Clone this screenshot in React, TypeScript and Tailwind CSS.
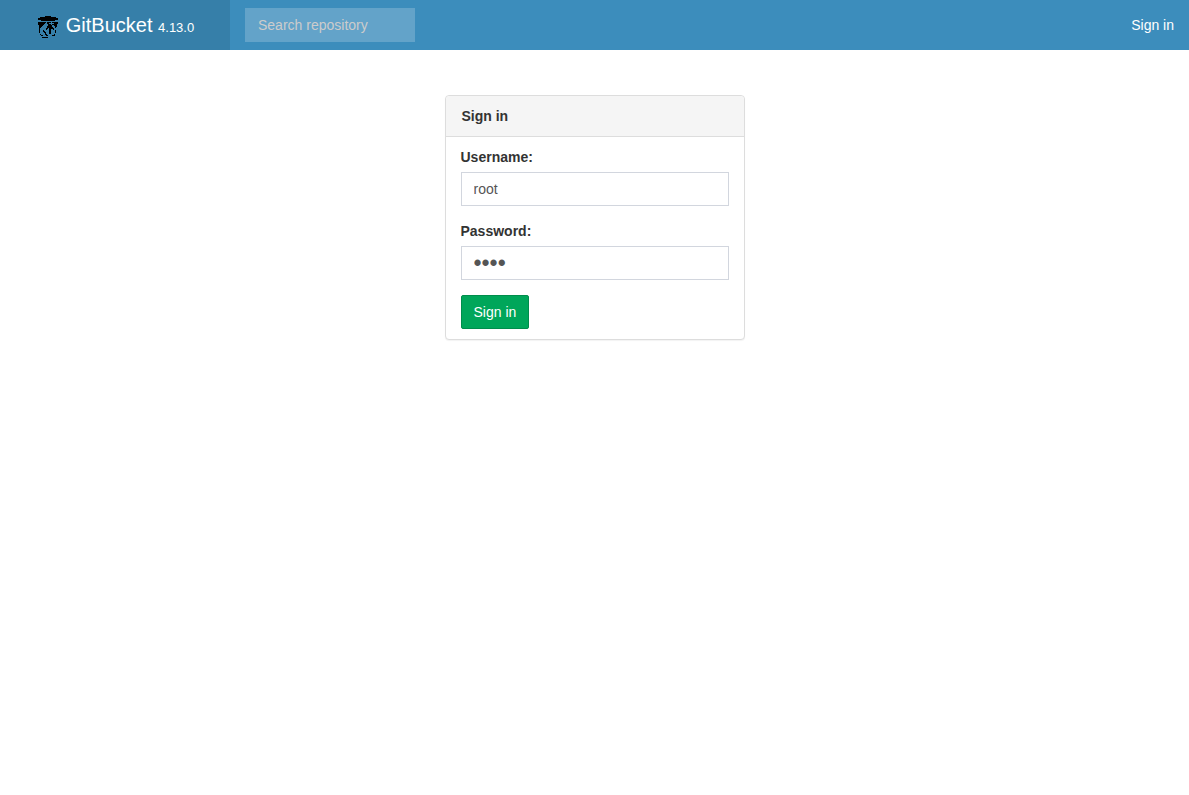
import { useState } from "react";

const VERSION = "4.13.0";

function BucketLogo() {
  return (
    <svg
      aria-hidden="true"
      width="20"
      height="22"
      viewBox="0 0 20 22"
      fill="#000"
      shapeRendering="crispEdges"
    >
      {/* rim */}
      <path d="M7 0h6v1h5v1h2v2h-3v1H3V4H0V2h2V1h5z" />
      {/* left side */}
      <path d="M0 6h8v1H7v1H6v1H5v1H4v1H3v1H2v1H1V9H0z" />
      <path d="M1 13h1v4H1z" />
      {/* right side */}
      <path d="M9 6h4v1h-2v1H9V7h0zM14 6h6v2h-1v3h-1v1h-1v-2h-1V9h-2V8h2V7h-2z" />
      <path d="M17 14h1v3h-1z" />
      {/* branch */}
      <path d="M10 8h3v1h1v2h1v1h1v2h-1v-1h-2v5h-2v-6h-1v1H9v1H8v-2h1v-2h1z" />
      <path d="M5 14h1v1h1v1h1v2h1v1h1v1H8v-1H7v-2H6v-1H5z" />
      {/* bottom */}
      <path d="M2 18h1v1h2v1H3v-1H2zM4 21h6v1H4zM14 19h2v-1h1v2h-3z" />
    </svg>
  );
}

function Header() {
  return (
    <header className="flex h-[50px] bg-[#3c8dbc] text-white">
      <a
        href="#"
        className="flex w-[230px] shrink-0 items-center justify-center gap-2 bg-[#367fa9] pl-0.5 text-xl"
      >
        <span className="pt-1">
          <BucketLogo />
        </span>
        <span className="whitespace-nowrap">
          GitBucket <span className="text-[13px]">{VERSION}</span>
        </span>
      </a>
      <nav className="flex flex-1 items-center justify-between px-[15px]">
        <input
          type="text"
          aria-label="Search repository"
          placeholder="Search repository"
          className="h-[34px] w-[170px] bg-white/20 px-[13px] text-sm placeholder:text-[#cccccc] focus:outline-none"
        />
        <a href="#signin" className="text-sm hover:underline">
          Sign in
        </a>
      </nav>
    </header>
  );
}

const inputClass =
  "mt-[5px] block h-[34px] w-full border border-[#d2d6de] bg-white px-3 text-[#555555] focus:border-[#3c8dbc] focus:outline-none";

export default function App() {
  const [userName, setUserName] = useState("root");
  const [password, setPassword] = useState("root");

  return (
    <div className="font-['Liberation_Sans',Arial,sans-serif] text-sm text-[#333333]">
      <Header />
      <main className="px-4 py-[45px]">
        <section
          id="signin"
          className="mx-auto max-w-[300px] rounded-sm border border-[#dddddd] bg-white shadow-[0_1px_1px_rgba(0,0,0,0.05)]"
        >
          <h1 className="rounded-t-sm border-b border-[#dddddd] bg-[#f5f5f5] px-4 py-[10px] text-sm font-bold">
            Sign in
          </h1>
          <form className="px-[15px] py-[10px]" onSubmit={(e) => e.preventDefault()}>
            <div className="mb-[15px]">
              <label htmlFor="userName" className="block font-bold">
                Username:
              </label>
              <input
                id="userName"
                type="text"
                value={userName}
                onChange={(e) => setUserName(e.target.value)}
                className={`${inputClass} text-sm`}
              />
            </div>
            <div className="mb-[15px]">
              <label htmlFor="password" className="block font-bold">
                Password:
              </label>
              {/* larger size only affects the bullets */}
              <input
                id="password"
                type="password"
                value={password}
                onChange={(e) => setPassword(e.target.value)}
                className={`${inputClass} text-[23px]`}
              />
            </div>
            <button
              type="submit"
              className="block h-[34px] cursor-pointer rounded-xs border border-[#008d4c] bg-[#00a65a] px-3 text-sm text-white hover:bg-[#008d4c]"
            >
              Sign in
            </button>
          </form>
        </section>
      </main>
    </div>
  );
}
